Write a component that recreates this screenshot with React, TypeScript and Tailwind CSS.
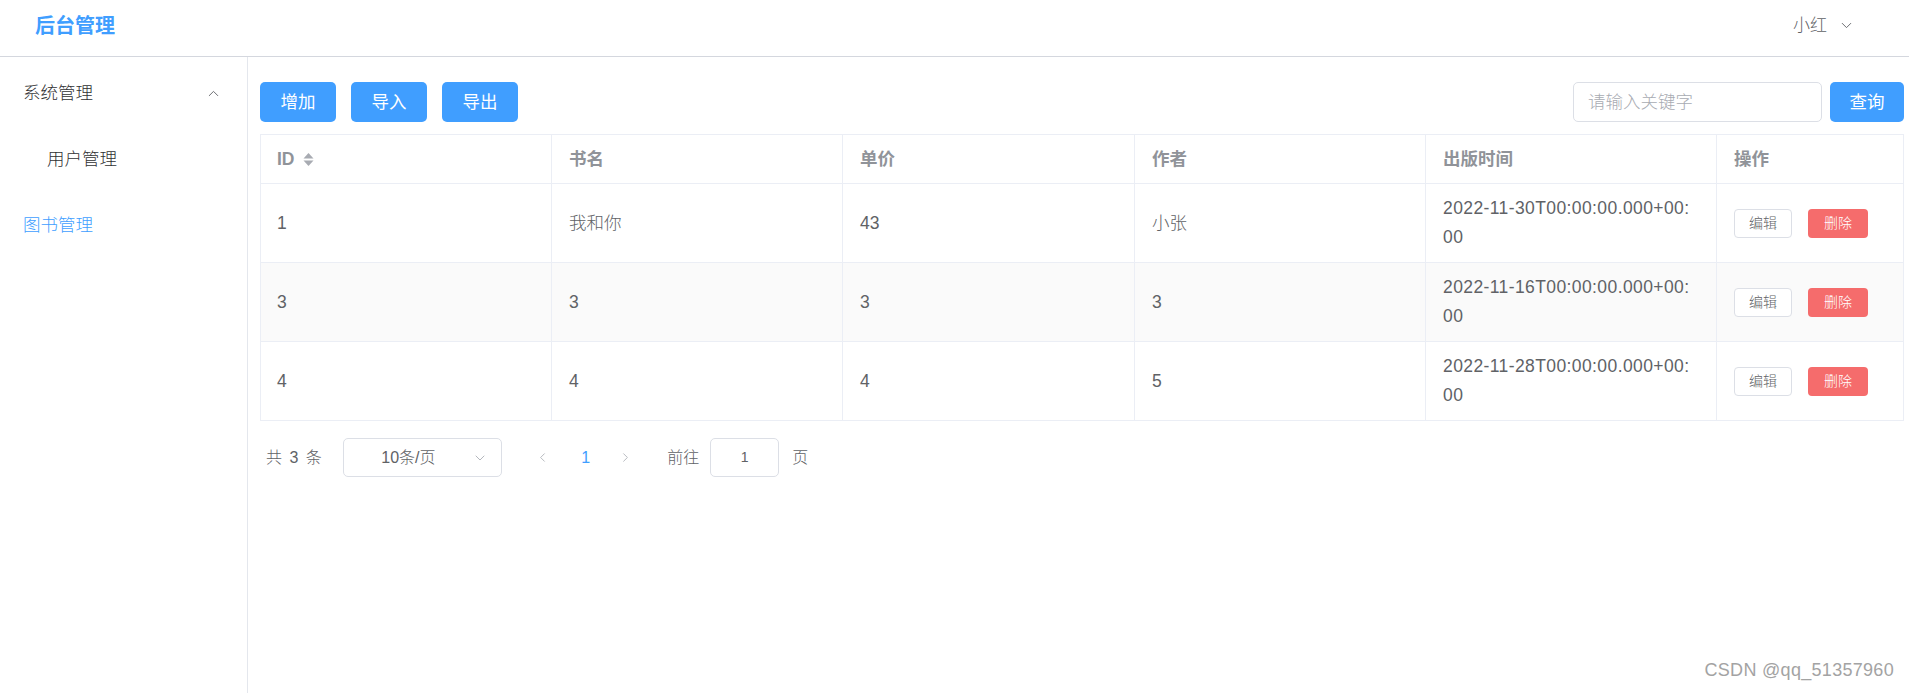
import React from "react";
import { ChevronDown, ChevronUp, ChevronLeft, ChevronRight } from "lucide-react";

const FONT = '"Liberation Sans", "Noto Sans CJK SC", sans-serif';

const rows = [
  { id: "1", name: "我和你", price: "43", author: "小张", date: "2022-11-30T00:00:00.000+00:", tail: "00" },
  { id: "3", name: "3", price: "3", author: "3", date: "2022-11-16T00:00:00.000+00:", tail: "00" },
  { id: "4", name: "4", price: "4", author: "5", date: "2022-11-28T00:00:00.000+00:", tail: "00" },
];

const cols = "grid grid-cols-[291px_291px_292px_291px_291px_1fr]";

function SortIcon() {
  return (
    <svg width="11" height="15" viewBox="0 0 11 15" className="ml-[8px]">
      <path d="M5.5 1 L10.5 6.5 L0.5 6.5 Z" fill="#a8abb2" />
      <path d="M5.5 14 L10.5 8.5 L0.5 8.5 Z" fill="#a8abb2" />
    </svg>
  );
}

export default function App() {
  return (
    <div className="relative h-[693px] w-full flex flex-col bg-white overflow-hidden" style={{ fontFamily: FONT }}>
      <header className="h-[57px] shrink-0 border-b border-[#d4d7de] flex items-center justify-between pl-[35px] pr-[54px] pb-[5px]">
        <div className="text-[20px] font-bold text-[#409eff]">后台管理</div>
        <div className="flex items-center gap-[11px] text-[17px] text-[#606266] font-light">
          <span>小红</span>
          <ChevronDown size={17} strokeWidth={1.3} className="text-[#606266]" />
        </div>
      </header>
      <div className="flex flex-1 min-h-0">
        <aside className="w-[248px] shrink-0 border-r border-[#e4e7ed] pt-[3px] text-[17.5px] text-[#303133] font-light">
          <div className="h-[66px] flex items-center justify-between pl-[23px] pr-[25px]">
            <span>系统管理</span>
            <ChevronUp size={17} strokeWidth={1.3} className="text-[#606266]" />
          </div>
          <div className="h-[66px] flex items-center pl-[47px]">用户管理</div>
          <div className="h-[66px] flex items-center pl-[23px] text-[#409eff]">图书管理</div>
        </aside>
        <main className="flex-1 min-w-0 pl-[12px] pr-[5px] pt-[25px]">
          <div className="flex items-center justify-between h-[40px]">
            <div className="flex gap-[15px]">
              {["增加", "导入", "导出"].map((t) => (
                <button key={t} className="w-[76px] h-[40px] rounded-[5px] bg-[#409eff] text-white text-[17.5px] flex items-center justify-center">
                  {t}
                </button>
              ))}
            </div>
            <div className="flex items-center gap-[8px]">
              <div className="w-[249px] h-[40px] rounded-[5px] border border-[#dcdfe6] flex items-center pl-[14px] text-[17.5px] text-[#a8abb2] font-light">
                请输入关键字
              </div>
              <button className="w-[74px] h-[40px] rounded-[5px] bg-[#409eff] text-white text-[17.5px] flex items-center justify-center">
                查询
              </button>
            </div>
          </div>

          <div className="mt-[12px] border border-[#ebeef5] border-b-0">
            <div className={`${cols} h-[49px] border-b border-[#ebeef5] text-[17.5px] font-bold text-[#909399]`}>
              <div className="flex items-center pl-[16px] border-r border-[#ebeef5]">
                ID
                <SortIcon />
              </div>
              {["书名", "单价", "作者", "出版时间", "操作"].map((h, i) => (
                <div key={h} className={`flex items-center pl-[17px] ${i < 4 ? "border-r border-[#ebeef5]" : ""}`}>
                  {h}
                </div>
              ))}
            </div>
            {rows.map((r, idx) => (
              <div
                key={r.id}
                className={`${cols} h-[79px] border-b border-[#ebeef5] text-[17.5px] text-[#606266] font-light ${idx === 1 ? "bg-[#fafafa]" : "bg-white"}`}
              >
                <div className="flex items-center pl-[16px] border-r border-[#ebeef5]">{r.id}</div>
                <div className="flex items-center pl-[17px] border-r border-[#ebeef5]">{r.name}</div>
                <div className="flex items-center pl-[17px] border-r border-[#ebeef5]">{r.price}</div>
                <div className="flex items-center pl-[17px] border-r border-[#ebeef5]">{r.author}</div>
                <div className="flex flex-col justify-center pl-[17px] border-r border-[#ebeef5] leading-[29px] tracking-[0.4px]">
                  <span>{r.date}</span>
                  <span>{r.tail}</span>
                </div>
                <div className="flex items-center pl-[17px] gap-[16px]">
                  <button className="w-[58px] h-[29px] rounded-[4px] border border-[#dcdfe6] bg-white text-[14px] text-[#606266] flex items-center justify-center">
                    编辑
                  </button>
                  <button className="w-[60px] h-[29px] rounded-[4px] bg-[#f56c6c] text-[14px] text-white flex items-center justify-center">
                    删除
                  </button>
                </div>
              </div>
            ))}
          </div>

          <div className="mt-[17px] h-[39px] flex items-center text-[16px] text-[#606266] font-light">
            <span className="ml-[6px] tracking-[1.5px]">共 3 条</span>
            <div className="ml-[20px] w-[159px] h-[39px] rounded-[5px] border border-[#dcdfe6] flex items-center justify-between pl-[37px] pr-[13px]">
              <span>10条/页</span>
              <ChevronDown size={16} strokeWidth={1.3} className="text-[#a8abb2]" />
            </div>
            <ChevronLeft size={15} strokeWidth={1.3} className="ml-[33px] text-[#a8abb2]" />
            <span className="ml-[31px] text-[#409eff]">1</span>
            <ChevronRight size={15} strokeWidth={1.3} className="ml-[28px] text-[#a8abb2]" />
            <span className="ml-[34px]">前往</span>
            <div className="ml-[11px] w-[69px] h-[39px] rounded-[5px] border border-[#dcdfe6] flex items-center justify-center text-[14px]">1</div>
            <span className="ml-[13px]">页</span>
          </div>
        </main>
      </div>
      <div className="absolute right-[15px] bottom-[9px] text-[18px] tracking-[0.3px] text-[#a3a3a3]" style={{ fontFamily: '"Liberation Sans", sans-serif' }}>
        CSDN @qq_51357960
      </div>
    </div>
  );
}
